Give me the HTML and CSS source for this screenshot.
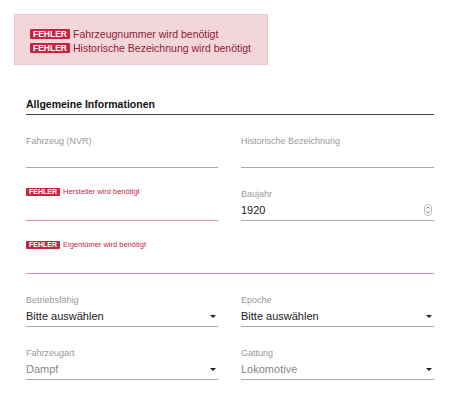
FILE: index.html
```html
<!DOCTYPE html>
<html lang="de">
<head>
<meta charset="utf-8">
<link rel="stylesheet" href="styles.css">
</head>
<body>
<div class="alert">
  <div class="alert-row"><span class="badge">FEHLER</span> Fahrzeugnummer wird benötigt</div>
  <div class="alert-row"><span class="badge">FEHLER</span> Historische Bezeichnung wird benötigt</div>
</div>
<form class="form">
  <h2 class="section">Allgemeine Informationen</h2>
  <div class="grid">
    <div class="field">
      <div class="label">Fahrzeug (NVR)</div>
      <div class="input"></div>
    </div>
    <div class="field">
      <div class="label">Historische Bezeichnung</div>
      <div class="input"></div>
    </div>
    <div class="field error">
      <div class="err"><span class="badge small">FEHLER</span> Hersteller wird benötigt</div>
      <div class="input"></div>
    </div>
    <div class="field">
      <div class="label">Baujahr</div>
      <div class="input value">1920
        <svg class="spin" width="8" height="12" viewBox="0 0 8 12"><rect x="0.5" y="0.5" width="7" height="11" rx="3.5" fill="none" stroke="#bbb"/><path d="M2.5 4.5 L4 3 L5.5 4.5 M2.5 7.5 L4 9 L5.5 7.5" fill="none" stroke="#555" stroke-width="0.8"/></svg>
      </div>
    </div>
    <div class="field error wide">
      <div class="err"><span class="badge small">FEHLER</span> Eigentümer wird benötigt</div>
      <div class="input"></div>
    </div>
    <div class="field">
      <div class="label">Betriebsfähig</div>
      <div class="input value select">Bitte auswählen<span class="caret"></span></div>
    </div>
    <div class="field">
      <div class="label">Epoche</div>
      <div class="input value select">Bitte auswählen<span class="caret"></span></div>
    </div>
    <div class="field">
      <div class="label">Fahrzeugart</div>
      <div class="input value select muted">Dampf<span class="caret"></span></div>
    </div>
    <div class="field">
      <div class="label">Gattung</div>
      <div class="input value select muted">Lokomotive<span class="caret"></span></div>
    </div>
  </div>
</form>
</body>
</html>
```
FILE: styles.css
```css
* { box-sizing: border-box; }
body {
  margin: 0;
  background: #fff;
  font-family: "Liberation Sans", Arial, sans-serif;
  color: #222;
}
.alert {
  margin: 14px 0 0 14px;
  width: 254px;
  height: 51px;
  background: #f3d6da;
  border: 1px solid #ecc8cd;
  padding: 12px 0 0 15px;
  color: #8e2236;
  font-size: 10.5px;
}
.alert-row {
  display: flex;
  align-items: center;
  gap: 3px;
  height: 14px;
  line-height: 14px;
  white-space: nowrap;
}
.badge {
  display: inline-block;
  background: #c9243f;
  color: #fff;
  font-weight: bold;
  font-size: 8.5px;
  line-height: 10px;
  height: 10px;
  padding: 0 3px;
  border-radius: 1px;
}
.badge.small {
  font-size: 7px;
  line-height: 8px;
  height: 8px;
  padding: 0 3px;
}
.form {
  margin: 33px 40px 0 26px;
}
.section {
  margin: 0;
  font-size: 10.5px;
  font-weight: bold;
  color: #111;
  padding-bottom: 3px;
  border-bottom: 1px solid #444;
  line-height: 13px;
}
.grid {
  display: grid;
  grid-template-columns: 192px 193px;
  column-gap: 23px;
}
.field {
  height: 53px;
  padding-top: 20px;
  display: flex;
  flex-direction: column;
}
.field.wide { grid-column: 1 / span 2; }
.label {
  font-size: 9px;
  color: #999;
  height: 12px;
  line-height: 12px;
}
.err {
  font-size: 7.5px;
  color: #c9243f;
  height: 12px;
  line-height: 8px;
  display: flex;
  align-items: flex-start;
  gap: 3px;
}
.input {
  flex: 1;
  border-bottom: 1px solid #aaa;
  font-size: 11px;
  line-height: 18px;
  display: flex;
  align-items: center;
  justify-content: space-between;
  color: #222;
}
.field.error .input { border-bottom-color: #d8909c; }
.muted { color: #888; }
.caret {
  width: 0; height: 0;
  border-left: 3px solid transparent;
  border-right: 3px solid transparent;
  border-top: 3.5px solid #222;
  margin-right: 2px;
}
.spin { margin-right: 2px; }
```
